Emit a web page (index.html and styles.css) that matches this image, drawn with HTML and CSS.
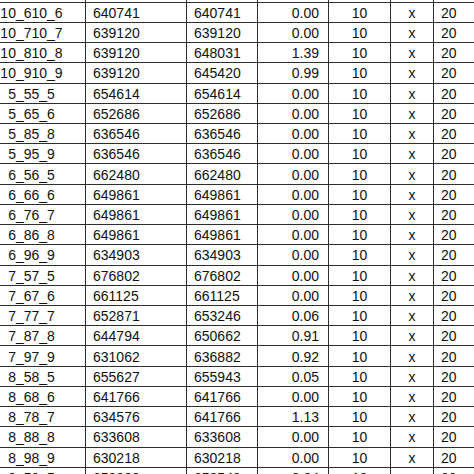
FILE: index.html
```html
<!DOCTYPE html>
<html>
<head>
<meta charset="utf-8">
<link rel="stylesheet" href="styles.css">
</head>
<body>
<div class="viewport">
<table class="results">
<colgroup>
<col class="c-name"><col class="c-lb"><col class="c-ub"><col class="c-gap"><col class="c-n"><col class="c-x"><col class="c-t">
</colgroup>
<tbody>
<tr class="spacer"><td></td><td></td><td></td><td></td><td></td><td></td><td></td></tr>
<tr><td class="name">10_610_6</td><td>640741</td><td>640741</td><td class="num">0.00</td><td class="mid">10</td><td class="mid">x</td><td>20</td></tr>
<tr><td class="name">10_710_7</td><td>639120</td><td>639120</td><td class="num">0.00</td><td class="mid">10</td><td class="mid">x</td><td>20</td></tr>
<tr><td class="name">10_810_8</td><td>639120</td><td>648031</td><td class="num">1.39</td><td class="mid">10</td><td class="mid">x</td><td>20</td></tr>
<tr><td class="name">10_910_9</td><td>639120</td><td>645420</td><td class="num">0.99</td><td class="mid">10</td><td class="mid">x</td><td>20</td></tr>
<tr><td class="name">5_55_5</td><td>654614</td><td>654614</td><td class="num">0.00</td><td class="mid">10</td><td class="mid">x</td><td>20</td></tr>
<tr><td class="name">5_65_6</td><td>652686</td><td>652686</td><td class="num">0.00</td><td class="mid">10</td><td class="mid">x</td><td>20</td></tr>
<tr><td class="name">5_85_8</td><td>636546</td><td>636546</td><td class="num">0.00</td><td class="mid">10</td><td class="mid">x</td><td>20</td></tr>
<tr><td class="name">5_95_9</td><td>636546</td><td>636546</td><td class="num">0.00</td><td class="mid">10</td><td class="mid">x</td><td>20</td></tr>
<tr><td class="name">6_56_5</td><td>662480</td><td>662480</td><td class="num">0.00</td><td class="mid">10</td><td class="mid">x</td><td>20</td></tr>
<tr><td class="name">6_66_6</td><td>649861</td><td>649861</td><td class="num">0.00</td><td class="mid">10</td><td class="mid">x</td><td>20</td></tr>
<tr><td class="name">6_76_7</td><td>649861</td><td>649861</td><td class="num">0.00</td><td class="mid">10</td><td class="mid">x</td><td>20</td></tr>
<tr><td class="name">6_86_8</td><td>649861</td><td>649861</td><td class="num">0.00</td><td class="mid">10</td><td class="mid">x</td><td>20</td></tr>
<tr><td class="name">6_96_9</td><td>634903</td><td>634903</td><td class="num">0.00</td><td class="mid">10</td><td class="mid">x</td><td>20</td></tr>
<tr><td class="name">7_57_5</td><td>676802</td><td>676802</td><td class="num">0.00</td><td class="mid">10</td><td class="mid">x</td><td>20</td></tr>
<tr><td class="name">7_67_6</td><td>661125</td><td>661125</td><td class="num">0.00</td><td class="mid">10</td><td class="mid">x</td><td>20</td></tr>
<tr><td class="name">7_77_7</td><td>652871</td><td>653246</td><td class="num">0.06</td><td class="mid">10</td><td class="mid">x</td><td>20</td></tr>
<tr><td class="name">7_87_8</td><td>644794</td><td>650662</td><td class="num">0.91</td><td class="mid">10</td><td class="mid">x</td><td>20</td></tr>
<tr><td class="name">7_97_9</td><td>631062</td><td>636882</td><td class="num">0.92</td><td class="mid">10</td><td class="mid">x</td><td>20</td></tr>
<tr><td class="name">8_58_5</td><td>655627</td><td>655943</td><td class="num">0.05</td><td class="mid">10</td><td class="mid">x</td><td>20</td></tr>
<tr><td class="name">8_68_6</td><td>641766</td><td>641766</td><td class="num">0.00</td><td class="mid">10</td><td class="mid">x</td><td>20</td></tr>
<tr><td class="name">8_78_7</td><td>634576</td><td>641766</td><td class="num">1.13</td><td class="mid">10</td><td class="mid">x</td><td>20</td></tr>
<tr><td class="name">8_88_8</td><td>633608</td><td>633608</td><td class="num">0.00</td><td class="mid">10</td><td class="mid">x</td><td>20</td></tr>
<tr><td class="name">8_98_9</td><td>630218</td><td>630218</td><td class="num">0.00</td><td class="mid">10</td><td class="mid">x</td><td>20</td></tr>
<tr><td class="name">9_59_5</td><td>653302</td><td>653549</td><td class="num">0.04</td><td class="mid">10</td><td class="mid">x</td><td>20</td></tr>
</tbody>
</table>
</div>
</body>
</html>
```

FILE: styles.css
```css
html, body {
  margin: 0;
  padding: 0;
  background: #ffffff;
}

.viewport {
  width: 474px;
  height: 474px;
  overflow: hidden;
  background: #ffffff;
}

.results {
  border-collapse: collapse;
  table-layout: fixed;
  width: 516px;
  margin-top: -18.5px;
  margin-left: -23px;
  font-family: "Liberation Sans", Arial, sans-serif;
  font-size: 14px;
  color: #111111;
}

.c-name { width: 108px; }
.c-lb { width: 101px; }
.c-ub { width: 71px; }
.c-gap { width: 71px; }
.c-n { width: 62px; }
.c-x { width: 43px; }
.c-t { width: 60px; }

.results tr {
  height: 20.22px;
}

.results td {
  border: 1px solid #2e2e2e;
  padding: 2px 0 0 7px;
  line-height: 17px;
  white-space: nowrap;
  overflow: hidden;
  vertical-align: middle;
}

.results td.name {
  text-align: center;
  padding-left: 0;
}

.results td.num {
  text-align: right;
  padding-left: 0;
  padding-right: 9px;
}

.results td.mid {
  text-align: center;
  padding-left: 0;
}
```
